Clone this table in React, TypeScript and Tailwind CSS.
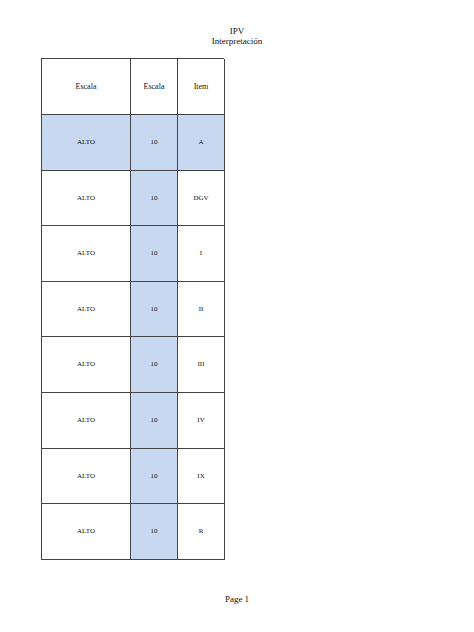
import React from 'react';

const items = ['DGV', 'I', 'II', 'III', 'IV', 'IX', 'R'];

export default function App() {
    return (
        <main className="w-[474px] h-[632px] bg-white relative text-[#111]" style={{ fontFamily: '"Liberation Serif", "Times New Roman", serif' }}>
            <div className="flex flex-col items-center pt-[26px] text-[9px] leading-[10px]">
                <div>IPV</div>
                <div>Interpretación</div>
            </div>

            <div className="ml-[41px] mt-[12px] w-[183px] grid grid-cols-[89px_47px_47px] border-l border-t border-[#444]">
                {/* header row */}
                <div className="h-[56px] flex items-center justify-center border-r border-b border-[#444] text-[8px]">Escala</div>
                <div className="h-[56px] flex items-center justify-center border-r border-b border-[#444] text-[8px]">Escala</div>
                <div className="h-[56px] flex items-center justify-center border-r border-b border-[#444] text-[8px]">Item</div>

                {/* first row - fully highlighted */}
                <div className="h-[55.6px] flex items-center justify-center border-r border-b border-[#444] bg-[#c6d9f1] text-[7px]">ALTO</div>
                <div className="h-[55.6px] flex items-center justify-center border-r border-b border-[#444] bg-[#c6d9f1] text-[7px]">10</div>
                <div className="h-[55.6px] flex items-center justify-center border-r border-b border-[#444] bg-[#c6d9f1] text-[7px]">A</div>

                {items.map((it) => (
                    <React.Fragment key={it}>
                        <div className="h-[55.6px] flex items-center justify-center border-r border-b border-[#444] text-[7px]">ALTO</div>
                        <div className="h-[55.6px] flex items-center justify-center border-r border-b border-[#444] bg-[#c6d9f1] text-[7px]">10</div>
                        <div className="h-[55.6px] flex items-center justify-center border-r border-b border-[#444] text-[7px]">{it}</div>
                    </React.Fragment>
                ))}
            </div>

            <div className="mt-[34px] text-center text-[9px] leading-[10px]">Page 1</div>
        </main>
    );
}
